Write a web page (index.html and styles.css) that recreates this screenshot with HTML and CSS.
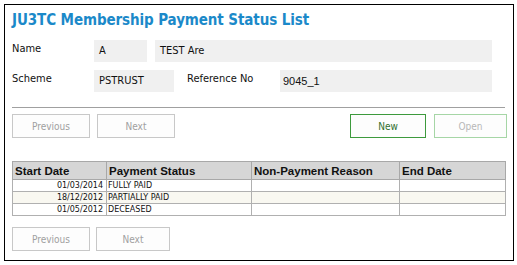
FILE: index.html
```html
<!DOCTYPE html>
<html lang="en">
<head>
  <meta charset="UTF-8">
  <title>JU3TC Membership Payment Status List</title>
  <link rel="stylesheet" href="styles.css">
</head>
<body>
  <div id="panel">
    <h1 class="title">JU3TC Membership Payment Status List</h1>

    <div class="form-row">
      <label class="field-label">Name</label>
      <div class="field field-initial">A</div>
      <div class="field field-surname">TEST Are</div>
    </div>
    <div class="form-row">
      <label class="field-label">Scheme</label>
      <div class="field field-scheme">PSTRUST</div>
      <label class="field-label ref-label">Reference No</label>
      <div class="field field-ref">9045_1</div>
    </div>

    <hr class="divider">

    <div class="button-bar">
      <button class="btn btn-prev" disabled>Previous</button>
      <button class="btn btn-next" disabled>Next</button>
      <span class="spacer"></span>
      <button class="btn btn-new">New</button>
      <button class="btn btn-open" disabled>Open</button>
    </div>

    <table class="status-table">
      <thead>
        <tr>
          <th class="col-start">Start Date</th>
          <th class="col-status">Payment Status</th>
          <th class="col-reason">Non-Payment Reason</th>
          <th class="col-end">End Date</th>
        </tr>
      </thead>
      <tbody>
        <tr>
          <td class="date">01/03/2014</td>
          <td>FULLY PAID</td>
          <td></td>
          <td></td>
        </tr>
        <tr class="alt">
          <td class="date">18/12/2012</td>
          <td>PARTIALLY PAID</td>
          <td></td>
          <td></td>
        </tr>
        <tr>
          <td class="date">01/05/2012</td>
          <td>DECEASED</td>
          <td></td>
          <td></td>
        </tr>
      </tbody>
    </table>

    <div class="button-bar bottom-bar">
      <button class="btn btn-prev" disabled>Previous</button>
      <button class="btn btn-next2" disabled>Next</button>
    </div>
  </div>
</body>
</html>
```

FILE: styles.css
```css
body {
  margin: 0;
  padding: 0;
  background-color: #fff;
  font-family: 'DejaVu Sans Condensed', 'DejaVu Sans', sans-serif;
  color: #222;
}

#panel {
  margin: 4px 0 0 4px;
  width: 510px;
  height: 257px;
  border: 1px solid #000;
  padding: 0 0 0 7px;
  box-sizing: border-box;
  background-color: #fff;
}

.title {
  margin: 0;
  padding: 6px 0 0 0;
  height: 35px;
  box-sizing: border-box;
  font-size: 15px;
  font-weight: bold;
  color: #1b89c9;
  letter-spacing: -0.1px;
}

.form-row {
  display: flex;
  align-items: center;
  height: 22px;
  margin-bottom: 8px;
}

.field-label {
  width: 82px;
  font-size: 11px;
  color: #111;
  padding-bottom: 6px;
}

.field {
  height: 22px;
  box-sizing: border-box;
  padding: 0 0 0 5px;
  background-color: #f0f0f0;
  font-size: 11px;
  line-height: 22px;
  color: #111;
}

.field-initial {
  width: 53px;
  margin-right: 8px;
}

.field-surname {
  width: 337px;
}

.field-scheme {
  width: 80px;
  margin-right: 13px;
}

.ref-label {
  width: 93px;
}

.field-ref {
  width: 212px;
  padding-left: 3px;
  font-family: 'Liberation Sans', Arial, sans-serif;
}

.divider {
  margin: 15px 0 6px 0;
  width: 493px;
  height: 0;
  border: none;
  border-top: 1px solid #a0a0a0;
}

.button-bar {
  display: flex;
  gap: 7px;
  height: 24px;
}

.btn {
  height: 24px;
  padding: 0;
  background-color: #fdfdfd;
  border: 1px solid #c8c8c8;
  font-family: 'DejaVu Sans Condensed', 'DejaVu Sans', sans-serif;
  font-size: 10px;
  color: #a0a0a0;
}

.btn-prev,
.btn-next {
  width: 78px;
}

.btn-next2 {
  width: 74px;
  margin-left: -1px;
}

.spacer {
  flex: 1;
}

.btn-new {
  width: 76px;
  margin-right: 1px;
  border-color: #3d9a3d;
  color: #2e6e2e;
}

.btn-open {
  width: 73px;
  margin-right: 6px;
  border-color: #a6d6a6;
  color: #b8b8b8;
}

/* tabla de estados */
.status-table {
  margin-top: 23px;
  width: 494px;
  table-layout: fixed;
  border-collapse: collapse;
  border: 1px solid #a8a8a8;
}

.status-table th {
  box-sizing: border-box;
  height: 18px;
  padding: 0 0 0 2px;
  background-color: #d6d6d6;
  border: 1px solid #a8a8a8;
  text-align: left;
  font-family: 'Liberation Sans', Arial, sans-serif;
  font-size: 11.5px;
  font-weight: bold;
  color: #111;
  overflow: hidden;
  white-space: nowrap;
}

.col-start { width: 94px; }
.col-status { width: 145px; }
.col-reason { width: 148px; }

.status-table td {
  height: 11px;
  padding: 0 1px;
  border: 1px solid #b0b0b0;
  font-family: 'DejaVu Sans', Verdana, sans-serif;
  font-size: 8px;
  line-height: 11px;
  color: #111;
  white-space: nowrap;
}

.status-table tr.alt td {
  background-color: #f9f8f1;
}

.status-table td.date {
  text-align: right;
  padding-right: 3px;
}

.bottom-bar {
  margin-top: 11px;
}
```
